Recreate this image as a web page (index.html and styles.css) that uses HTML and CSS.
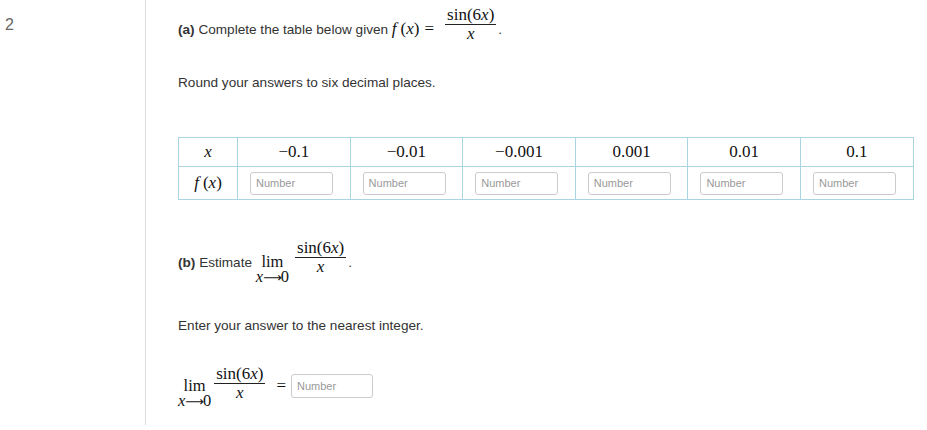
FILE: index.html
```html
<!DOCTYPE html>
<html>
<head>
<meta charset="utf-8">
<link rel="stylesheet" href="styles.css">
</head>
<body>
<div class="page">
  <div class="side"><span class="qnum">2</span></div>
  <div class="main">
    <div class="line part-a"><b>(a)</b> Complete the table below given <span class="m"><i class="f">f</i>(<i>x</i>)</span><span class="m eq eq1">=</span><span class="frac"><span class="num m">sin(6<i>x</i>)</span><span class="den m"><i>x</i></span></span>.</div>
    <p class="para round">Round your answers to six decimal places.</p>
    <table class="tbl">
      <colgroup>
        <col class="c0"><col class="c"><col class="c"><col class="c"><col class="c"><col class="c"><col class="c">
      </colgroup>
      <tr class="hrow">
        <td class="m"><i>x</i></td>
        <td class="m">−0.1</td>
        <td class="m">−0.01</td>
        <td class="m">−0.001</td>
        <td class="m">0.001</td>
        <td class="m">0.01</td>
        <td class="m">0.1</td>
      </tr>
      <tr class="irow">
        <td class="m fx"><i class="f">f</i>(<i>x</i>)</td>
        <td><input class="inp" placeholder="Number"></td>
        <td><input class="inp" placeholder="Number"></td>
        <td><input class="inp" placeholder="Number"></td>
        <td><input class="inp" placeholder="Number"></td>
        <td><input class="inp" placeholder="Number"></td>
        <td><input class="inp" placeholder="Number"></td>
      </tr>
    </table>
    <div class="line part-b"><b>(b)</b> Estimate <span class="lim"><span class="m top">lim</span><span class="sub m"><i>x</i><span class="arr">⟶</span>0</span></span><span class="frac"><span class="num m">sin(6<i>x</i>)</span><span class="den m"><i>x</i></span></span>.</div>
    <p class="para enter">Enter your answer to the nearest integer.</p>
    <div class="line final"><span class="lim"><span class="m top">lim</span><span class="sub m"><i>x</i><span class="arr">⟶</span>0</span></span><span class="frac"><span class="num m">sin(6<i>x</i>)</span><span class="den m"><i>x</i></span></span><span class="m eq eq2">=</span><input class="inp inp2" placeholder="Number"></div>
  </div>
</div>
</body>
</html>
```

FILE: styles.css
```css
html, body {
  margin: 0;
  padding: 0;
  background: #fff;
}
body {
  font-family: "Liberation Sans", Arial, sans-serif;
  font-size: 13.6px;
  color: #333;
}
.page {
  display: flex;
  align-items: flex-start;
}
.side {
  width: 145px;
  height: 425px;
  border-right: 1px solid #ddd;
}
.qnum {
  display: block;
  padding: 17px 0 0 5px;
  font-size: 16px;
  color: #666;
  line-height: 16px;
}
.main {
  padding-left: 32px;
  flex: 1;
}
.m {
  font-family: "Liberation Serif", "DejaVu Serif", serif;
  font-size: 17px;
  color: #111;
}
.m i { font-style: italic; }
.m i.f { margin-right: 4px; }
.line {
  white-space: nowrap;
  line-height: 16px;
}
.line b { font-weight: bold; }
.part-a {
  margin-top: 6px;
  height: 34px;
}
.eq {
  margin: 0 6px 0 6px;
}
.eq1 {
  margin: 0 9px 0 5px;
}
.frac {
  display: inline-block;
  vertical-align: -5px;
  text-align: center;
  margin: 0 2px;
}
.frac .num {
  display: block;
  padding: 0 2px 0;
  border-bottom: 1px solid #222;
  line-height: 18px;
}
.frac .den {
  display: block;
  line-height: 17px;
}
.para {
  margin: 0;
  line-height: 16px;
}
.round {
  margin-top: 35px;
}
.tbl {
  margin-top: 46px;
  border-collapse: collapse;
  table-layout: fixed;
  width: 735px;
}
.c0 { width: 59px; }
.c { width: 112.6px; }
.tbl td {
  border: 1px solid #a9d5e3;
  text-align: center;
  padding: 0;
}
.hrow td {
  height: 28px;
}
.irow td {
  height: 32px;
}
.irow td:not(.fx) {
  text-align: left;
  padding-left: 12px;
}
.inp {
  box-sizing: border-box;
  width: 83px;
  height: 23px;
  border: 1px solid #ccc;
  border-radius: 3px;
  font-family: "Liberation Sans", Arial, sans-serif;
  font-size: 11px;
  padding: 0 5px;
  margin: 0;
  vertical-align: middle;
  background: #fff;
}
.inp::placeholder {
  color: #999;
}
.part-b {
  margin-top: 39px;
  height: 40px;
}
.lim {
  display: inline-block;
  vertical-align: -15px;
  text-align: center;
  margin-right: 4px;
}
.lim .top {
  display: block;
  line-height: 14px;
  font-size: 16.5px;
}
.lim .sub {
  display: block;
  line-height: 15px;
  font-size: 16.5px;
}
.arr {
  font-family: "DejaVu Sans", sans-serif;
  font-size: 13px;
  letter-spacing: -1px;
}
.enter {
  margin-top: 39px;
}
.final {
  margin-top: 31px;
}
.final .lim {
  margin-right: 1px;
}
.final .frac {
  vertical-align: -7px;
}
.final .eq2 {
  margin: 0 5px 0 9px;
}
.inp2 {
  width: 82px;
  height: 24px;
  vertical-align: 1px;
}
```
